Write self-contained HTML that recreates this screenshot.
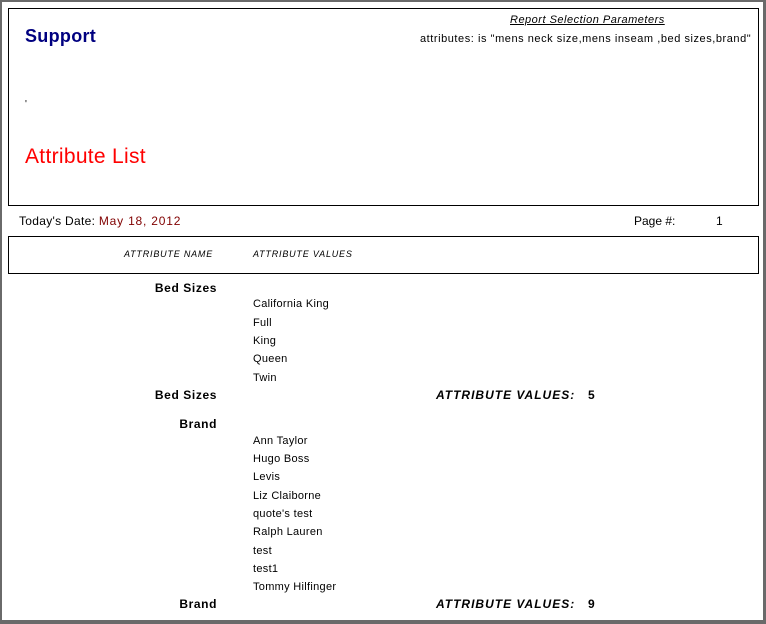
<!DOCTYPE html>
<html><head><style>
body{margin:0;width:766px;height:624px;background:#6a6a6a;position:relative;overflow:hidden;font-family:"Liberation Sans",sans-serif;}
#pg{position:absolute;left:2px;top:2px;width:761px;height:618px;background:#fff;}
.a{position:absolute;white-space:nowrap;}
.box{position:absolute;border:1px solid #000;}
.s{font-size:11px;color:#000;letter-spacing:0.3px;}
.b{font-size:12px;font-weight:bold;letter-spacing:0.6px;}
.bi{font-size:12px;font-weight:bold;font-style:italic;letter-spacing:1px;}
</style></head><body>
<div id="pg"></div>
<div class="box" style="left:8px;top:8px;width:749px;height:196px;"></div>
<div class="a" style="left:25px;top:26px;font-size:18px;font-weight:bold;color:#000080;letter-spacing:0.3px;">Support</div>
<div class="a" style="left:510px;top:14px;font-size:11px;font-style:italic;text-decoration:underline;letter-spacing:0.5px;">Report Selection Parameters</div>
<div class="a" style="left:420px;top:33px;font-size:11px;letter-spacing:0.55px;">attributes: is "mens neck size,mens inseam ,bed sizes,brand"</div>
<div class="a" style="left:25px;top:99px;font-size:10px;">'</div>
<div class="a" style="left:25px;top:145px;font-size:21px;color:#ff0000;letter-spacing:0.3px;">Attribute List</div>
<div class="a" style="left:19px;top:214px;font-size:12px;letter-spacing:0.3px;">Today's Date: <span style="color:#800000;letter-spacing:0.8px">May 18, 2012</span></div>
<div class="a" style="left:634px;top:214px;font-size:12px;">Page #:</div>
<div class="a" style="left:716px;top:214px;font-size:12px;">1</div>
<div class="box" style="left:8px;top:236px;width:749px;height:36px;"></div>
<div class="a" style="left:124px;top:249px;font-size:9px;font-style:italic;letter-spacing:0.8px;">ATTRIBUTE NAME</div>
<div class="a" style="left:253px;top:249px;font-size:9px;font-style:italic;letter-spacing:0.8px;">ATTRIBUTE VALUES</div>

<div class="a b" style="right:549px;top:281px;">Bed Sizes</div>
<div class="a s" style="left:253px;top:298px;">California King</div>
<div class="a s" style="left:253px;top:317px;">Full</div>
<div class="a s" style="left:253px;top:335px;">King</div>
<div class="a s" style="left:253px;top:353px;">Queen</div>
<div class="a s" style="left:253px;top:372px;">Twin</div>
<div class="a b" style="right:549px;top:388px;">Bed Sizes</div>
<div class="a bi" style="left:436px;top:388px;">ATTRIBUTE VALUES:</div>
<div class="a b" style="left:588px;top:388px;">5</div>

<div class="a b" style="right:549px;top:417px;">Brand</div>
<div class="a s" style="left:253px;top:435px;">Ann Taylor</div>
<div class="a s" style="left:253px;top:453px;">Hugo Boss</div>
<div class="a s" style="left:253px;top:471px;">Levis</div>
<div class="a s" style="left:253px;top:490px;">Liz Claiborne</div>
<div class="a s" style="left:253px;top:508px;">quote's test</div>
<div class="a s" style="left:253px;top:526px;">Ralph Lauren</div>
<div class="a s" style="left:253px;top:545px;">test</div>
<div class="a s" style="left:253px;top:563px;">test1</div>
<div class="a s" style="left:253px;top:581px;">Tommy Hilfinger</div>
<div class="a b" style="right:549px;top:597px;">Brand</div>
<div class="a bi" style="left:436px;top:597px;">ATTRIBUTE VALUES:</div>
<div class="a b" style="left:588px;top:597px;">9</div>
</body></html>
